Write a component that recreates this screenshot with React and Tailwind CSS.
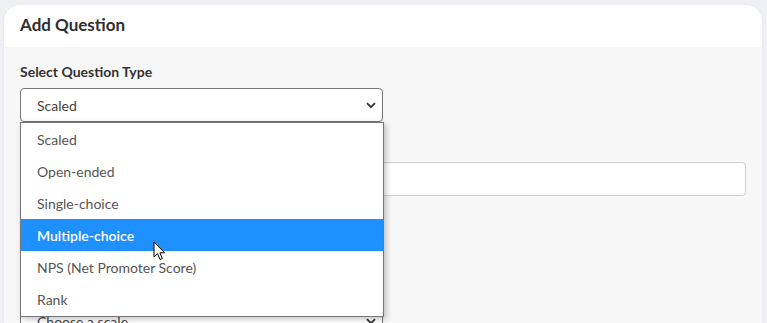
import React from 'react';

const OPTIONS = [
  'Scaled',
  'Open-ended',
  'Single-choice',
  'Multiple-choice',
  'NPS (Net Promoter Score)',
  'Rank',
];

function Chevron() {
  return (
    <svg width="10" height="7" viewBox="0 0 10 7" className="text-[#333]">
      <path d="M1 1.2 L5 5.2 L9 1.2" fill="none" stroke="currentColor" strokeWidth="1.8" />
    </svg>
  );
}

function Cursor() {
  return (
    <svg
      width="14"
      height="21"
      viewBox="0 0 14 21"
      className="absolute left-[132px] top-[22px] pointer-events-none"
    >
      <path
        d="M1 1 L1 16 L4.5 12.6 L7 18.5 L9.3 17.5 L6.9 11.8 L11.6 11.8 Z"
        fill="#fff"
        stroke="#000"
        strokeWidth="1"
        strokeLinejoin="round"
      />
    </svg>
  );
}

export default function App() {
  const selected = 3;
  return (
    <div
      className="min-h-[323px] bg-[#eef0f4] pt-[5px] pl-[4px] pr-[5px] overflow-hidden"
      style={{ fontFamily: 'Lato, "Open Sans", sans-serif' }}
    >
      <div className="rounded-t-[16px] bg-[#f7f7f7] shadow-[0_0_2px_rgba(0,0,0,0.08)] h-[318px]">
        <div className="h-[42px] bg-white rounded-t-[16px] px-4 pt-[7px]">
          <h2 className="text-[17px] font-bold text-[#2f2f2f]">Add Question</h2>
        </div>
        <div className="px-4 pt-[15px]">
          <label className="block text-[14px] font-bold text-[#333] leading-5 mb-[6px]">
            Select Question Type
          </label>
          <div className="relative w-[363px]">
            <div className="h-[34px] rounded-[4px] border border-[#767676] bg-white flex items-center justify-between pl-[16px] pr-[6px]">
              <span className="text-[14px] text-[#444]">Scaled</span>
              <Chevron />
            </div>
            <ul className="absolute z-10 left-0 top-full w-[364px] border border-[#767676] bg-white shadow-[2px_2px_6px_rgba(0,0,0,0.25)] pb-[1px]">
              {OPTIONS.map((o, i) => (
                <li
                  key={o}
                  className={
                    'relative h-[32px] flex items-center pl-[16px] text-[14px] ' +
                    (i === selected ? 'bg-[#1e90ff] text-white font-semibold' : 'text-[#555]')
                  }
                >
                  {o}
                  {i === selected && <Cursor />}
                </li>
              ))}
            </ul>
          </div>
          <label className="block text-[14px] font-bold text-[#333] leading-5 mt-[15px] mb-[5px]">
            Question
          </label>
          <div className="h-[34px] rounded-[4px] border border-[#cfcfcf] bg-white" />
          <div className="mt-[84px] mb-[4px] text-[14px] font-bold text-[#333] leading-5">Scale</div>
          <div className="w-[363px] h-[34px] rounded-[4px] border border-[#767676] bg-white flex items-center justify-between pl-[16px] pr-[6px]">
            <span className="text-[14px] text-[#444]">Choose a scale</span>
            <Chevron />
          </div>
        </div>
      </div>
    </div>
  );
}
